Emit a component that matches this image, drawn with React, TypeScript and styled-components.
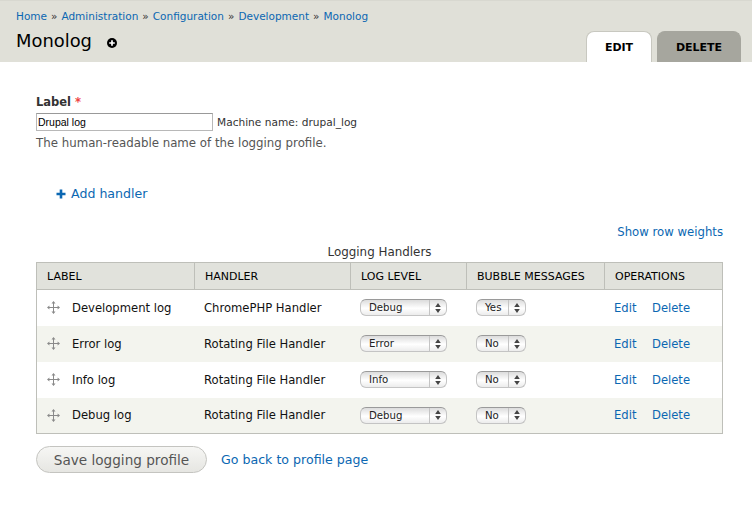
import React from "react"
import styled, { createGlobalStyle } from "styled-components"

const handlers = [
  { label: "Development log", handler: "ChromePHP Handler", level: "Debug", bubble: "Yes" },
  { label: "Error log", handler: "Rotating File Handler", level: "Error", bubble: "No" },
  { label: "Info log", handler: "Rotating File Handler", level: "Info", bubble: "No" },
  { label: "Debug log", handler: "Rotating File Handler", level: "Debug", bubble: "No" },
]

const crumbs = ["Home", "Administration", "Configuration", "Development", "Monolog"]

const DragHandle = () => (
  <svg width="13" height="13" viewBox="0 0 13 13" fill="none">
    <path d="M6.5 1v11M1 6.5h11" stroke="#8a8a8a" strokeWidth="1" />
    <path d="M6.5 0l2 2.4h-4zM6.5 13l2-2.4h-4zM0 6.5l2.4-2v4zM13 6.5l-2.4-2v4z" fill="#8a8a8a" />
  </svg>
)

const Arrows = () => (
  <svg width="6" height="10" viewBox="0 0 6 10">
    <path d="M3 0l2.8 4H.2zM3 10L.2 6h5.6z" fill="#444" />
  </svg>
)

const App = () => (
  <>
    <GlobalStyle />
    <Header>
      <Breadcrumb>
        {crumbs.map((crumb, i) => (
          <React.Fragment key={crumb}>
            {i > 0 && <Sep>»</Sep>}
            <Link>{crumb}</Link>
          </React.Fragment>
        ))}
      </Breadcrumb>
      <TitleRow>
        <TitleGroup>
          <Title>Monolog</Title>
          <Shortcut>
            <svg width="10" height="10" viewBox="0 0 10 10">
              <circle cx="5" cy="5" r="5" fill="#000" />
              <path d="M5 2.2v5.6M2.2 5h5.6" stroke="#fff" strokeWidth="1.7" />
            </svg>
          </Shortcut>
        </TitleGroup>
        <Tabs>
          <Tab $active>EDIT</Tab>
          <Tab>DELETE</Tab>
        </Tabs>
      </TitleRow>
    </Header>
    <Content>
      <FieldLabel>
        Label <Required>*</Required>
      </FieldLabel>
      <InputRow>
        <TextInput defaultValue="Drupal log" />
        <MachineName>Machine name: drupal_log</MachineName>
      </InputRow>
      <Description>The human-readable name of the logging profile.</Description>
      <AddHandler>
        <svg width="10" height="10" viewBox="0 0 10 10">
          <path d="M5 .5v9M.5 5h9" stroke="#0b67b2" strokeWidth="2.6" />
        </svg>
        <Link>Add handler</Link>
      </AddHandler>
      <WeightsRow>
        <Link>Show row weights</Link>
      </WeightsRow>
      <Table>
        <Caption>Logging Handlers</Caption>
        <thead>
          <tr>
            <Th $width={158}>LABEL</Th>
            <Th $width={156}>HANDLER</Th>
            <Th $width={116}>LOG LEVEL</Th>
            <Th $width={138}>BUBBLE MESSAGES</Th>
            <Th $width={118}>OPERATIONS</Th>
          </tr>
        </thead>
        <tbody>
          {handlers.map((row, i) => (
            <Row key={row.label} $even={i % 2 === 1}>
              <Td>
                <LabelCell>
                  <DragHandle />
                  {row.label}
                </LabelCell>
              </Td>
              <Td>{row.handler}</Td>
              <Td>
                <Select $width={87}>
                  <SelectValue>{row.level}</SelectValue>
                  <SelectArrow>
                    <Arrows />
                  </SelectArrow>
                </Select>
              </Td>
              <Td>
                <Select $width={50}>
                  <SelectValue>{row.bubble}</SelectValue>
                  <SelectArrow>
                    <Arrows />
                  </SelectArrow>
                </Select>
              </Td>
              <Td>
                <Operations>
                  <Link>Edit</Link>
                  <Link>Delete</Link>
                </Operations>
              </Td>
            </Row>
          ))}
        </tbody>
      </Table>
      <Actions>
        <SaveButton>Save logging profile</SaveButton>
        <Link>Go back to profile page</Link>
      </Actions>
    </Content>
  </>
)

const GlobalStyle = createGlobalStyle`
  html, body {
    margin: 0;
    padding: 0;
    background: #fff;
    font-family: "DejaVu Sans", "Liberation Sans", sans-serif;
    font-size: 12px;
    color: #333;
  }
`
const Link = styled.a`
  color: #0b67b2;
  cursor: pointer;
`
const Header = styled.header`
  height: 62px;
  box-sizing: border-box;
  padding: 8px 11px 0 16px;
  background: #e0e0d8;
  border-top: 1px solid #d8d8d0;
  display: flex;
  flex-direction: column;
`
const Breadcrumb = styled.div`
  font-size: 10.5px;
  line-height: 14px;
  display: flex;
  gap: 4px;
`
const Sep = styled.span`
  color: #333;
`
const TitleRow = styled.div`
  flex: 1;
  display: flex;
  justify-content: space-between;
  align-items: flex-end;
`
const TitleGroup = styled.div`
  display: flex;
  align-items: center;
  gap: 15px;
  align-self: flex-start;
  margin-top: 7px;
`
const Title = styled.h1`
  margin: 0;
  font-size: 17.9px;
  line-height: 22px;
  font-weight: 400;
  color: #000;
`
const Shortcut = styled.span`
  display: flex;
  margin-top: 4px;
`
const Tabs = styled.div`
  display: flex;
  gap: 5px;
`
const Tab = styled.a<{ $active?: boolean }>`
  height: 31px;
  box-sizing: border-box;
  padding-top: 9px;
  width: ${p => (p.$active ? 66 : 84)}px;
  text-align: center;
  font-size: 11px;
  line-height: 14px;
  font-weight: 700;
  color: #000;
  border-radius: 8px 8px 0 0;
  background: ${p => (p.$active ? "#fff" : "#a6a69e")};
  border: 1px solid ${p => (p.$active ? "#c8c8c0" : "#a6a69e")};
  border-bottom: none;
`
const Content = styled.main`
  padding: 33px 29px 0 36px;
`
const FieldLabel = styled.div`
  font-size: 11.5px;
  line-height: 14px;
  font-weight: 700;
`
const Required = styled.span`
  color: #e44;
`
const InputRow = styled.div`
  margin-top: 4px;
  display: flex;
  align-items: center;
  gap: 4px;
`
const TextInput = styled.input`
  width: 177px;
  height: 18px;
  box-sizing: border-box;
  padding: 0 1px;
  border: 1px solid #b8b8b8;
  border-top-color: #999;
  border-radius: 0;
  outline: none;
  font-family: "Liberation Sans", sans-serif;
  font-size: 10.5px;
  color: #000;
`
const MachineName = styled.span`
  font-size: 10.6px;
  color: #333;
`
const Description = styled.div`
  margin-top: 5px;
  font-size: 11.8px;
  line-height: 14px;
  color: #555;
`
const AddHandler = styled.div`
  margin: 36px 0 0 20px;
  display: flex;
  align-items: center;
  gap: 5px;
  font-size: 12.6px;
  line-height: 16px;
`
const WeightsRow = styled.div`
  margin-top: 23px;
  text-align: right;
  font-size: 11.7px;
  line-height: 14px;
`
const Table = styled.table`
  width: 687px;
  margin-top: 6px;
  table-layout: fixed;
  border-collapse: collapse;
  border: 1px solid #bebfb9;
  font-size: 11.6px;
`
const Caption = styled.caption`
  height: 17px;
  line-height: 14px;
  font-size: 11.9px;
  color: #333;
`
const Th = styled.th<{ $width: number }>`
  width: ${p => p.$width}px;
  height: 27px;
  box-sizing: border-box;
  padding: 0 10px;
  background: #e1e2dc;
  border: 1px solid #bebfb9;
  text-align: left;
  font-size: 11px;
  font-weight: 400;
  color: #000;
`
const Row = styled.tr<{ $even: boolean }>`
  height: 36px;
  background: ${p => (p.$even ? "#f3f4ee" : "#fff")};
`
const Td = styled.td`
  padding: 0 10px 0 9.5px;
  color: #111;
`
const LabelCell = styled.div`
  display: flex;
  align-items: center;
  gap: 12.5px;
`
const Select = styled.div<{ $width: number }>`
  width: ${p => p.$width}px;
  height: 17px;
  box-sizing: border-box;
  display: flex;
  border: 1px solid #c4c4c4;
  border-top-color: #9a9a9a;
  border-radius: 6px;
  background: linear-gradient(#dcdcdc, #fff 55%, #ececec);
  font-size: 10.2px;
  color: #222;
`
const SelectValue = styled.span`
  flex: 1;
  padding-left: 8px;
  line-height: 15px;
`
const SelectArrow = styled.span`
  width: 16px;
  display: flex;
  align-items: center;
  justify-content: center;
  border-left: 1px solid #c4c4c4;
`
const Operations = styled.div`
  display: flex;
  gap: 15.5px;
`
const Actions = styled.div`
  margin-top: 12px;
  display: flex;
  align-items: center;
  gap: 14px;
  font-size: 12.6px;
`
const SaveButton = styled.button`
  width: 171px;
  height: 27px;
  padding: 0;
  border: 1px solid #c4c4c0;
  border-radius: 14px;
  background: linear-gradient(#f6f6f4, #e6e6e2);
  font-family: inherit;
  font-size: 13.6px;
  color: #555;
`

export default App
